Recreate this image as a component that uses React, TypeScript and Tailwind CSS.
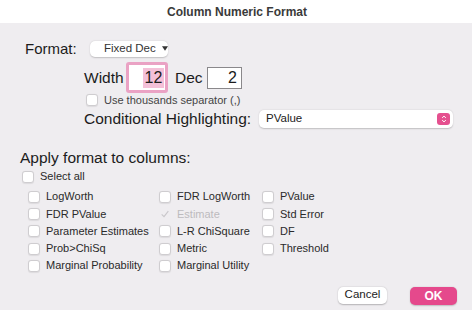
import React from "react";

type Item = { label: string; disabled?: boolean; checked?: boolean };

const rows: Item[][] = [
  [{ label: "LogWorth" }, { label: "FDR LogWorth" }, { label: "PValue" }],
  [{ label: "FDR PValue" }, { label: "Estimate", disabled: true, checked: true }, { label: "Std Error" }],
  [{ label: "Parameter Estimates" }, { label: "L-R ChiSquare" }, { label: "DF" }],
  [{ label: "Prob>ChiSq" }, { label: "Metric" }, { label: "Threshold" }],
  [{ label: "Marginal Probability" }, { label: "Marginal Utility" }],
];

function Check({ disabled, checked }: { disabled?: boolean; checked?: boolean }) {
  if (disabled) {
    return (
      <div className="w-[12px] h-[12px] flex items-center justify-center shrink-0">
        {checked && (
          <svg viewBox="0 0 12 12" className="w-[10px] h-[10px]">
            <path d="M2 6.5 L4.8 9.2 L10 2.5" fill="none" stroke="#c9c7ca" strokeWidth="1.3" />
          </svg>
        )}
      </div>
    );
  }
  return (
    <div className="w-[12px] h-[12px] shrink-0 rounded-[3px] bg-white border border-[#cfcdd0] shadow-[0_0.5px_1px_rgba(0,0,0,0.08)]" />
  );
}

function CheckItem({ item }: { item: Item }) {
  return (
    <div className="flex items-center gap-[6px] h-[17.25px]">
      <Check disabled={item.disabled} checked={item.checked} />
      <span className={`text-[11px] leading-none ${item.disabled ? "text-[#bdbbbe]" : "text-[#2a2a2a]"}`}>
        {item.label}
      </span>
    </div>
  );
}

export default function App() {
  return (
    <div
      className="w-[474px] h-[313px] bg-white flex flex-col overflow-hidden"
      style={{ fontFamily: '"Liberation Sans", Arial, sans-serif' }}
    >
      {/* Title */}
      <div className="h-[23px] flex items-center justify-center text-[12px] font-bold text-[#3a3a3a]">
        Column Numeric Format
      </div>

      {/* Body */}
      <div className="flex-1 mr-[2px] mb-[3px] bg-[#efedf0] flex flex-col text-[#1c1c1c]">
        {/* Format */}
        <div className="flex items-center pl-[25px] mt-[17px] h-[17px]">
          <span className="text-[15px] leading-none w-[65px]">Format:</span>
          <div className="h-[16px] w-[78px] bg-white rounded-[5px] shadow-[0_0.5px_1.5px_rgba(0,0,0,0.2)] flex items-center pl-[14px] gap-[6px]">
            <span className="text-[11.5px] leading-none text-[#333]">Fixed Dec</span>
            <svg viewBox="0 0 8 6" className="w-[6px] h-[5px]">
              <path d="M0 0 H8 L4 6 Z" fill="#333" />
            </svg>
          </div>
        </div>

        {/* Width / Dec */}
        <div className="flex items-center pl-[84px] mt-[5px] h-[31px]">
          <span className="text-[15.5px] leading-none w-[42px]">Width</span>
          <div className="w-[42px] h-[31px] border-[3px] border-[#eaa2c4] rounded-[3px] bg-white flex items-center justify-end pr-[1px]">
            <span className="w-[21px] h-[20px] flex items-center justify-center text-[16px] leading-none bg-[#f4c0d8]">12</span>
          </div>
          <span className="text-[15.5px] leading-none ml-[7px] w-[32px]">Dec</span>
          <div className="w-[35px] h-[22px] border border-[#8a888b] bg-white flex items-center justify-end pr-[4px]">
            <span className="text-[16px] leading-none">2</span>
          </div>
        </div>

        {/* Thousands */}
        <div className="flex items-center pl-[86px] mt-[1px] h-[12px] gap-[6px]">
          <Check />
          <span className="text-[11px] leading-none text-[#444]">Use thousands separator (,)</span>
        </div>

        {/* Conditional highlighting */}
        <div className="flex items-center pl-[84px] mt-[3px] h-[19px]">
          <span className="text-[15.5px] leading-none w-[175px] whitespace-nowrap">Conditional Highlighting:</span>
          <div className="w-[194px] h-[18px] bg-white rounded-[5px] shadow-[0_0.5px_1.5px_rgba(0,0,0,0.2)] flex items-center justify-between pl-[7px] pr-[3px]">
            <span className="text-[11.5px] leading-none text-[#222]">PValue</span>
            <div className="w-[13px] h-[12px] rounded-[3px] bg-[#e5508f] flex items-center justify-center">
              <svg viewBox="0 0 8 10" className="w-[6px] h-[8px]">
                <path d="M1.5 3.5 L4 1.2 L6.5 3.5 M1.5 6.5 L4 8.8 L6.5 6.5" fill="none" stroke="white" strokeWidth="1.3" />
              </svg>
            </div>
          </div>
        </div>

        {/* Apply format */}
        <div className="pl-[20px] mt-[21px] h-[18px] flex items-center">
          <span className="text-[15.5px] leading-none">Apply format to columns:</span>
        </div>
        <div className="pl-[22px] mt-[1px]">
          <CheckItem item={{ label: "Select all" }} />
        </div>

        <div className="pl-[28px] mt-[3px] grid grid-cols-[131px_103px_auto]">
          {rows.map((row, r) =>
            [0, 1, 2].map((c) =>
              row[c] ? <CheckItem key={`${r}-${c}`} item={row[c]} /> : <div key={`${r}-${c}`} />
            )
          )}
        </div>

        {/* Buttons */}
        <div className="flex justify-end gap-[23px] pr-[15px] mt-[12px]">
          <button className="w-[49px] h-[17px] bg-white rounded-[5px] shadow-[0_0.5px_1.5px_rgba(0,0,0,0.25)] text-[11.5px] leading-none text-[#222]">
            Cancel
          </button>
          <button className="w-[47px] h-[18px] bg-[#e5498c] rounded-[5px] shadow-[0_0.5px_1.5px_rgba(0,0,0,0.2)] text-[12px] font-bold leading-none text-white">
            OK
          </button>
        </div>
      </div>
    </div>
  );
}
